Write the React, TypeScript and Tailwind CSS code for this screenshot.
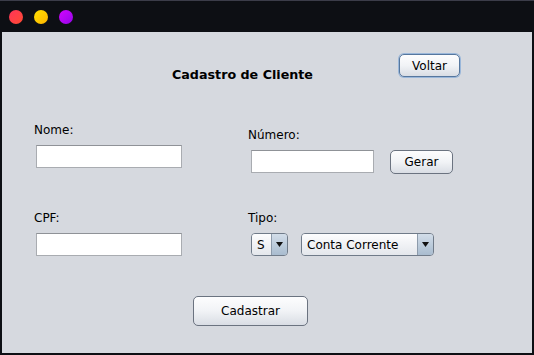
import React from "react";

const font = { fontFamily: '"DejaVu Sans", "Liberation Sans", sans-serif' };

function Button({ label, className = "" }: { label: string; className?: string }) {
  return (
    <button
      className={`flex items-center justify-center rounded-[5px] border border-[#6b7380] bg-linear-to-b from-[#fdfdfe] via-[#f1f3f6] to-[#d9dde4] text-[12px] text-black ${className}`}
    >
      {label}
    </button>
  );
}

function Field({ className = "" }: { className?: string }) {
  return (
    <div
      className={`h-[23px] border border-[#a9acb1] border-t-[#8f9297] bg-white ${className}`}
    />
  );
}

function Combo({ value, className = "" }: { value: string; className?: string }) {
  return (
    <div
      className={`flex h-[23px] overflow-hidden rounded-[4px] border border-[#707b89] text-[12px] text-black ${className}`}
    >
      <div className="flex flex-1 items-center bg-linear-to-b from-[#fdfdfe] to-[#e4e7ec] pl-[5px]">
        {value}
      </div>
      <div className="flex w-[16px] items-center justify-center border-l border-[#8d9bab] bg-linear-to-b from-[#d2dde9] to-[#a9bccf]">
        <svg width="7" height="5" viewBox="0 0 7 5">
          <path d="M0 0H7L3.5 5Z" fill="#111" />
        </svg>
      </div>
    </div>
  );
}

export default function App() {
  return (
    <div className="h-[355px] w-[534px] bg-[#0d0f14]" style={font}>
      {/* Barra de título */}
      <div className="flex h-[32px] items-center gap-[11px] border-t border-[#3b3c49] pl-[9px]">
        <div className="h-[14px] w-[14px] rounded-full bg-linear-to-br from-[#ff3358] to-[#ff4a2e]" />
        <div className="h-[14px] w-[14px] rounded-full bg-linear-to-br from-[#ffe100] to-[#ffb300]" />
        <div className="h-[14px] w-[14px] rounded-full bg-linear-to-br from-[#d400ff] to-[#9400e8]" />
      </div>

      {/* Conteúdo */}
      <div className="mx-[2px] h-[321px] bg-[#d6d9df]">
        <div className="flex items-start pt-[22px]">
          <div className="ml-[170px] mt-[13px] w-[227px] text-[12.7px] font-bold leading-[16px] text-black">
            Cadastro de Cliente
          </div>
          <Button
            label="Voltar"
            className="h-[23px] w-[61px] border-[#56779e] shadow-[0_0_0_1px_#9ab7da]"
          />
        </div>

        <div className="mt-[39px] flex items-start">
          <div className="ml-[32px] w-[214px]">
            <div className="text-[12px] leading-[16px] text-black">Nome:</div>
            <Field className="ml-[2px] mt-[7px] w-[146px]" />
          </div>
          <div className="mt-[5px]">
            <div className="text-[12px] leading-[16px] text-black">Número:</div>
            <div className="mt-[7px] flex">
              <Field className="ml-[3px] w-[123px]" />
              <Button label="Gerar" className="ml-[16px] h-[24px] w-[63px]" />
            </div>
          </div>
        </div>

        <div className="mt-[36px] flex items-start">
          <div className="ml-[32px] w-[214px]">
            <div className="text-[12px] leading-[16px] text-black">CPF:</div>
            <Field className="ml-[2px] mt-[7px] w-[146px]" />
          </div>
          <div>
            <div className="text-[12px] leading-[16px] text-black">Tipo:</div>
            <div className="mt-[7px] flex">
              <Combo value="S" className="ml-[3px] w-[37px]" />
              <Combo value="Conta Corrente" className="ml-[13px] w-[133px]" />
            </div>
          </div>
        </div>

        <Button label="Cadastrar" className="ml-[191px] mt-[40px] h-[30px] w-[115px]" />
      </div>
    </div>
  );
}
